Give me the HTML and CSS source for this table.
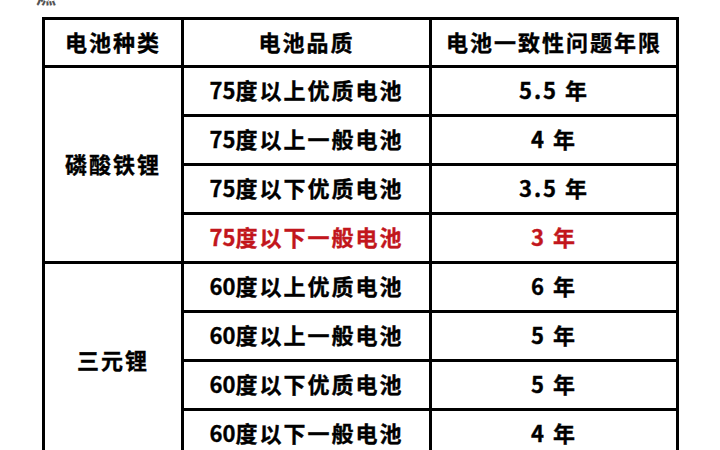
FILE: index.html
```html
<!DOCTYPE html>
<html lang="zh">
<head>
<meta charset="utf-8">
<link rel="stylesheet" href="styles.css">
</head>
<body>
<div class="top-strip"><span class="clip-glyph">燃</span></div>
<table class="battery">
  <colgroup>
    <col class="c1"><col class="c2"><col class="c3">
  </colgroup>
  <thead>
    <tr class="head"><th>电池种类</th><th>电池品质</th><th>电池一致性问题年限</th></tr>
  </thead>
  <tbody>
    <tr><td rowspan="4">磷酸铁锂</td><td><span class="num">75</span>度以上优质电池</td><td>5.5 年</td></tr>
    <tr><td><span class="num">75</span>度以上一般电池</td><td>4 年</td></tr>
    <tr><td><span class="num">75</span>度以下优质电池</td><td>3.5 年</td></tr>
    <tr class="warn"><td><span class="num">75</span>度以下一般电池</td><td>3 年</td></tr>
    <tr><td rowspan="4">三元锂</td><td><span class="num">60</span>度以上优质电池</td><td>6 年</td></tr>
    <tr><td><span class="num">60</span>度以上一般电池</td><td>5 年</td></tr>
    <tr><td><span class="num">60</span>度以下优质电池</td><td>5 年</td></tr>
    <tr><td><span class="num">60</span>度以下一般电池</td><td>4 年</td></tr>
  </tbody>
</table>
</body>
</html>
```
FILE: styles.css
```css
html, body {
  margin: 0;
  padding: 0;
  background: #fff;
  overflow: hidden;
}
body {
  width: 720px;
  height: 450px;
  font-family: "Noto Sans CJK SC", "Noto Sans", sans-serif;
  color: #000;
}
.top-strip {
  height: 17px;
  padding-left: 36px;
  overflow: hidden;
}
.clip-glyph {
  display: block;
  font-size: 20px;
  line-height: 20px;
  margin-top: -14px;
  color: #555;
  font-weight: 700;
}
.battery {
  margin-left: 42px;
  border-collapse: collapse;
  table-layout: fixed;
  width: 637px;
  border: 3px solid #000;
}
.c1 { width: 139px; }
.c2 { width: 248px; }
.c3 { width: 247px; }
.battery th,
.battery td {
  border: 3px solid #000;
  padding: 0 0 4px 0;
  text-align: center;
  vertical-align: middle;
  font-weight: 700;
  font-size: 22px;
  letter-spacing: 2px;
  line-height: 1;
  -webkit-text-stroke: 0.35px currentColor;
}
.num { letter-spacing: 0; }
.head { height: 48px; }
.battery tbody tr { height: 49px; }
.warn td { color: #c2161c; }
```
